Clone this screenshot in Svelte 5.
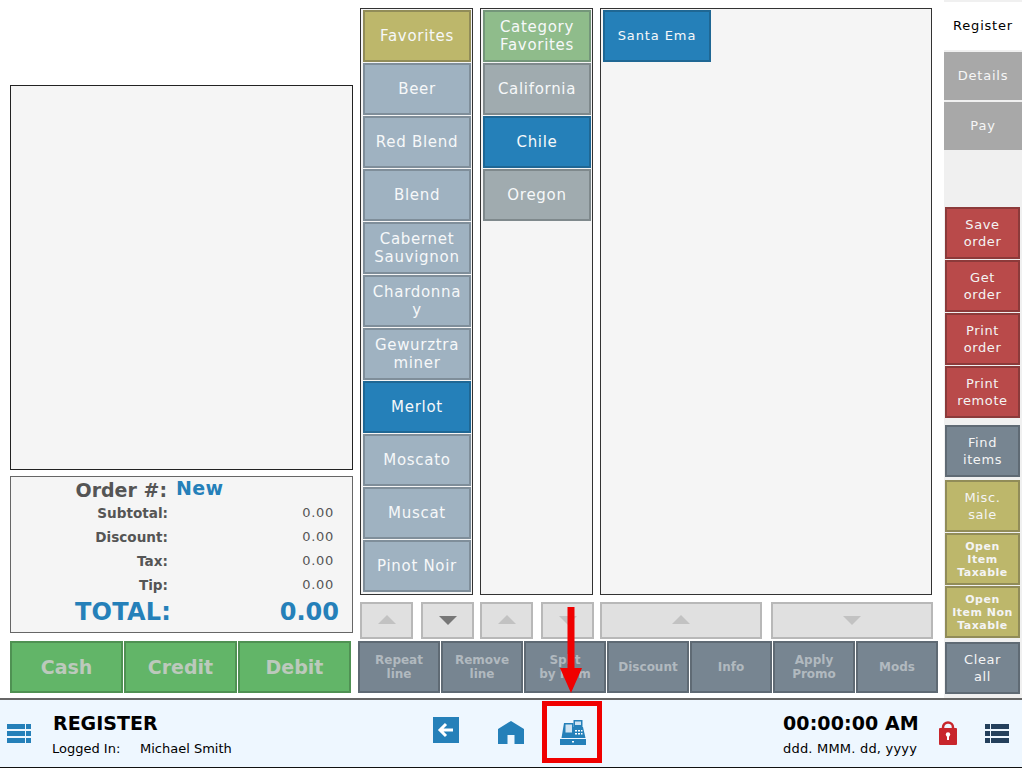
<script>
  const categories = [
    { label: 'Favorites', tone: 'olive' },
    { label: 'Beer' },
    { label: 'Red Blend' },
    { label: 'Blend' },
    { label: 'Cabernet\nSauvignon' },
    { label: 'Chardonna\ny' },
    { label: 'Gewurztra\nminer' },
    { label: 'Merlot', tone: 'blue' },
    { label: 'Moscato' },
    { label: 'Muscat' },
    { label: 'Pinot Noir' }
  ];
  const subcategories = [
    { label: 'Category\nFavorites', tone: 'green' },
    { label: 'California', tone: 'slate' },
    { label: 'Chile', tone: 'blue' },
    { label: 'Oregon', tone: 'slate' }
  ];
  const totals = ['Subtotal:', 'Discount:', 'Tax:', 'Tip:'];
  const actions = [
    'Repeat\nline', 'Remove\nline', 'Split\nby Item', 'Discount', 'Info', 'Apply\nPromo', 'Mods'
  ];
  const orderButtons = ['Save\norder', 'Get\norder', 'Print\norder', 'Print\nremote'];
  const openItems = ['Open\nItem\nTaxable', 'Open\nItem Non\nTaxable'];
</script>

<div class="page">
  <div class="main">
    <section class="left">
      <div class="receipt"></div>
      <div class="summary">
        <div class="order-line">
          <span class="order-label">Order #:</span>
          <span class="order-value">New</span>
        </div>
        {#each totals as label}
          <div class="total-line">
            <span class="total-label">{label}</span>
            <span class="total-value">0.00</span>
          </div>
        {/each}
        <div class="grand-line">
          <span class="grand-label">TOTAL:</span>
          <span class="grand-value">0.00</span>
        </div>
      </div>
      <div class="pay-row">
        <button class="pay" type="button">Cash</button>
        <button class="pay" type="button">Credit</button>
        <button class="pay" type="button">Debit</button>
      </div>
    </section>

    <section class="center">
      <div class="lists">
        <div class="list narrow">
          {#each categories as item}
            <button class="tile {item.tone ?? 'steel'}" type="button">{item.label}</button>
          {/each}
        </div>
        <div class="list narrow">
          {#each subcategories as item}
            <button class="tile {item.tone}" type="button">{item.label}</button>
          {/each}
        </div>
        <div class="list wide">
          <button class="tile blue small" type="button">Santa Ema</button>
        </div>
      </div>

      <div class="scrolls">
        <button class="scroll s1" type="button"><span class="arrow up"></span></button>
        <button class="scroll s2" type="button"><span class="arrow down dark"></span></button>
        <button class="scroll s3" type="button"><span class="arrow up"></span></button>
        <button class="scroll s4" type="button"><span class="arrow down"></span></button>
        <button class="scroll s5" type="button"><span class="arrow up"></span></button>
        <button class="scroll s6" type="button"><span class="arrow down"></span></button>
      </div>

      <div class="actions">
        {#each actions as label}
          <button class="action" type="button">{label}</button>
        {/each}
      </div>
    </section>

    <aside class="side">
      <div class="tabs">
        <button class="tab active" type="button">Register</button>
        <button class="tab" type="button">Details</button>
        <button class="tab" type="button">Pay</button>
      </div>
      <div class="side-group red-group">
        {#each orderButtons as label}
          <button class="side-btn red" type="button">{label}</button>
        {/each}
      </div>
      <div class="side-group find-group">
        <button class="side-btn dim" type="button">{'Find\nitems'}</button>
        <button class="side-btn olive misc" type="button">{'Misc.\nsale'}</button>
        {#each openItems as label}
          <button class="side-btn olive tiny" type="button">{label}</button>
        {/each}
      </div>
      <button class="side-btn dim clear" type="button">{'Clear\nall'}</button>
    </aside>
  </div>

  <footer class="footer">
    <div class="foot-left">
      <svg class="menu-icon" width="24" height="19" viewBox="0 0 24 19" fill="#2580b9">
        <rect x="0" y="0" width="18" height="5" /><rect x="19" y="0" width="5" height="5" />
        <rect x="0" y="7" width="18" height="5" /><rect x="19" y="7" width="5" height="5" />
        <rect x="0" y="14" width="18" height="5" /><rect x="19" y="14" width="5" height="5" />
      </svg>
      <div class="title-block">
        <div class="title">REGISTER</div>
        <div class="logged"><span class="logged-label">Logged In:</span><span>Michael Smith</span></div>
      </div>
    </div>

    <div class="foot-nav">
      <svg class="back" width="26" height="26" viewBox="0 0 26 26">
        <rect width="26" height="26" fill="#2580b9" />
        <path d="M7 13h13M13 7l-6 6 6 6" fill="none" stroke="#fff" stroke-width="3" />
      </svg>
      <svg class="home" width="26" height="23" viewBox="0 0 26 23" fill="#2580b9">
        <path d="M13 0 26 8v15H16.500v-9h-7v9H0V8z" />
      </svg>
      <svg class="till" width="27" height="26" viewBox="0 0 27 26" fill="#2580b9">
        <rect x="13.500" y="0" width="9" height="7" />
        <rect x="15" y="1.500" width="6" height="3.500" fill="#cfe3f2" />
        <path d="M4 3h9.500v4H23l2.500 11H1.500z" />
        <rect x="5.500" y="4.500" width="6.500" height="8" fill="#cfe3f2" />
        <rect x="15" y="10" width="2" height="1.500" fill="#fff" /><rect x="18" y="10" width="2" height="1.500" fill="#fff" /><rect x="21" y="10" width="1.500" height="1.500" fill="#fff" />
        <rect x="15" y="13" width="2" height="1.500" fill="#fff" /><rect x="18" y="13" width="2" height="1.500" fill="#fff" /><rect x="21" y="13" width="1.500" height="1.500" fill="#fff" />
        <rect x="0" y="19" width="26" height="6" />
        <rect x="12" y="21" width="2" height="1.500" fill="#fff" />
      </svg>
    </div>

    <div class="foot-right">
      <div class="clock">
        <div class="time">00:00:00 AM</div>
        <div class="date">ddd. MMM. dd, yyyy</div>
      </div>
      <svg class="lock" width="18" height="24" viewBox="0 0 18 24">
        <path d="M4 9V6.500a5 5 0 0 1 10 0V9" fill="none" stroke="#c8262c" stroke-width="2.500" />
        <rect x="0" y="7" width="18" height="17" rx="1" fill="#c8262c" />
        <circle cx="9" cy="13.500" r="2.200" fill="#fff" />
        <rect x="8" y="14" width="2" height="5" fill="#fff" />
      </svg>
      <svg class="list-icon" width="24" height="19" viewBox="0 0 24 19" fill="#24405c">
        <rect x="0" y="0" width="5" height="5" /><rect x="6" y="0" width="18" height="5" />
        <rect x="0" y="7" width="5" height="5" /><rect x="6" y="7" width="18" height="5" />
        <rect x="0" y="14" width="5" height="5" /><rect x="6" y="14" width="18" height="5" />
      </svg>
    </div>
  </footer>

  <!-- callout drawn over the screenshot -->
  <svg class="callout-arrow" width="22" height="86" viewBox="0 0 22 86">
    <path d="M7.500 0h7v61H22L11 86 0 61h7.500z" fill="#f00000" />
  </svg>
  <div class="callout-box"></div>
</div>

<style>
  :global(body) {
    background: #fff;
  }

  .page {
    position: relative;
    width: 1022px;
    height: 768px;
    overflow: hidden;
    display: flex;
    flex-direction: column;
    font-family: "DejaVu Sans", Verdana, sans-serif;
  }

  button {
    font-family: inherit;
    padding: 0;
    margin: 0;
    box-sizing: border-box;
    cursor: pointer;
    line-height: 18px;
    white-space: pre-line;
  }

  .main {
    display: flex;
    height: 698px;
  }

  .left {
    box-sizing: border-box;
    width: 358px;
    padding: 85px 5px 0 10px;
  }

  .receipt {
    height: 385px;
    box-sizing: border-box;
    border: 1px solid #222;
    background: #f5f5f5;
  }

  .summary {
    box-sizing: border-box;
    height: 157px;
    margin-top: 6px;
    border: 1px solid #666;
    background: #f5f5f5;
    color: #555;
  }

  .order-line {
    display: flex;
    height: 24px;
  }

  .order-label {
    width: 156px;
    text-align: right;
    font-size: 19px;
    font-weight: 700;
    line-height: 26px;
  }

  .order-value {
    margin-left: 9px;
    font-size: 19px;
    font-weight: 700;
    color: #2580b9;
    line-height: 22px;
    letter-spacing: 0.3px;
  }

  .total-line {
    display: flex;
    justify-content: space-between;
    height: 24px;
    line-height: 24px;
    padding-right: 18px;
  }

  .total-label {
    width: 157px;
    text-align: right;
    font-size: 13.6px;
    font-weight: 700;
  }

  .total-value {
    font-size: 13px;
    letter-spacing: 0.7px;
  }

  .grand-line {
    display: flex;
    justify-content: space-between;
    padding-right: 13px;
    color: #2580b9;
    font-weight: 700;
    font-size: 24px;
    line-height: 28px;
    margin-top: 1px;
  }

  .grand-label {
    width: 160px;
    text-align: right;
    letter-spacing: 0.2px;
  }

  .pay-row {
    display: flex;
    gap: 1px;
    margin-top: 8px;
  }

  .pay {
    width: 113px;
    height: 52px;
    background: #62b568;
    border: 2px solid #4f9153;
    color: #bcc9bc;
    font-size: 19px;
    font-weight: 700;
  }

  .center {
    width: 586px;
    display: flex;
    flex-direction: column;
  }

  .lists {
    display: flex;
    gap: 7px;
    margin-left: 2px;
    padding-top: 8px;
    height: 587px;
  }

  .list {
    box-sizing: border-box;
    height: 587px;
    border: 1px solid #333;
    background: #f5f5f5;
    padding: 1px 1px 0 2px;
    display: flex;
    flex-direction: column;
    align-items: flex-start;
    gap: 1px;
    overflow: hidden;
  }

  .narrow {
    width: 113px;
  }

  .wide {
    width: 332px;
  }

  .tile {
    width: 108px;
    height: 52px;
    flex: none;
    border: 2px solid;
    color: #f6f8f9;
    font-size: 15px;
    letter-spacing: 0.7px;
  }

  .tile.small {
    font-size: 13px;
    letter-spacing: 0.9px;
  }

  .steel {
    background: #9fb2c1;
    border-color: #7f8e9a;
  }

  .green {
    background: #8fbc8b;
    border-color: #74967a;
  }

  .slate {
    background: #a0abaf;
    border-color: #7f898c;
  }

  .blue {
    background: #2580b9;
    border-color: #1f6794;
  }

  .scrolls {
    display: flex;
    margin: 7px 0 0 2px;
  }

  .scroll {
    height: 37px;
    background: #e0e0e0;
    border: 2px solid #b8b8b8;
    display: flex;
    align-items: center;
    justify-content: center;
  }

  .s1 { width: 53px; }
  .s2 { width: 53px; margin-left: 8px; }
  .s3 { width: 53px; margin-left: 6px; }
  .s4 { width: 53px; margin-left: 8px; }
  .s5 { width: 162px; margin-left: 6px; }
  .s6 { width: 162px; margin-left: 9px; }

  .arrow {
    width: 0;
    height: 0;
    border-left: 9px solid transparent;
    border-right: 9px solid transparent;
  }

  .arrow.up {
    border-bottom: 9px solid #c2c2c2;
    margin-bottom: 3px;
  }

  .arrow.down {
    border-top: 9px solid #c2c2c2;
  }

  .arrow.down.dark {
    border-top-color: #777;
  }

  .actions {
    display: flex;
    gap: 1px;
    margin-top: 2px;
  }

  .action {
    width: 82px;
    height: 52px;
    background: #778591;
    border: 2px solid #5f6a74;
    color: #b1b9bf;
    font-size: 12px;
    line-height: 14px;
    font-weight: 700;
  }

  .side {
    box-sizing: border-box;
    width: 78px;
    height: 698px;
    background: #f0f0f0;
    display: flex;
    flex-direction: column;
    align-items: flex-start;
  }

  .tabs {
    display: flex;
    flex-direction: column;
    gap: 2px;
    padding-top: 2px;
  }

  .tab {
    width: 78px;
    height: 48px;
    background: #a8a8a8;
    border: none;
    color: #f6f6f6;
    font-size: 13px;
    letter-spacing: 0.8px;
  }

  .tab.active {
    background: #fff;
    color: #000;
  }

  .side-group {
    display: flex;
    flex-direction: column;
    gap: 1px;
    margin-left: 1px;
  }

  .red-group {
    margin-top: 57px;
  }

  .find-group {
    margin-top: 7px;
  }

  .side-btn {
    width: 75px;
    height: 52px;
    border-width: 2px;
    border-style: solid;
    color: #f4f4f4;
    font-size: 13px;
    line-height: 17px;
    letter-spacing: 0.6px;
  }

  .side-btn.misc {
    margin-top: 2px;
  }

  .side-btn.tiny {
    font-size: 11px;
    line-height: 13px;
    font-weight: 700;
    letter-spacing: 0.5px;
  }

  .red {
    background: #b94a4a;
    border-color: #8c3a3a;
  }

  .dim {
    background: #778591;
    border-color: #5f6a74;
  }

  .olive {
    background: #bdb76b;
    border-color: #918c58;
  }

  .clear {
    margin: 4px 0 0 1px;
    flex: none;
  }

  .footer {
    box-sizing: border-box;
    height: 70px;
    border-top: 2px solid #666;
    border-bottom: 1px solid #111;
    background: #eef7ff;
    display: flex;
    justify-content: space-between;
    position: relative;
  }

  .foot-left {
    display: flex;
    align-items: flex-start;
    padding-left: 7px;
  }

  .menu-icon {
    margin-top: 24px;
  }

  .title-block {
    margin-left: 22px;
    color: #000;
  }

  .title {
    font-size: 19px;
    font-weight: 700;
    line-height: 24px;
    margin-top: 11px;
  }

  .logged {
    font-size: 13px;
    line-height: 16px;
    margin-top: 6px;
    margin-left: -1px;
    display: flex;
  }

  .logged-label {
    width: 88px;
  }

  .foot-nav {
    position: absolute;
    left: 433px;
    top: 0;
    display: flex;
    align-items: flex-start;
  }

  .back {
    margin-top: 17px;
  }

  .home {
    margin: 21px 0 0 39px;
  }

  .till {
    margin: 20px 0 0 36px;
  }

  .foot-right {
    display: flex;
    align-items: flex-start;
    padding-right: 13px;
  }

  .clock {
    color: #000;
    width: 137px;
    white-space: nowrap;
  }

  .time {
    font-size: 19px;
    font-weight: 700;
    line-height: 24px;
    margin-top: 11px;
    letter-spacing: 0.1px;
  }

  .date {
    font-size: 13px;
    line-height: 16px;
    margin-top: 6px;
    letter-spacing: 0.2px;
  }

  .lock {
    margin: 21px 0 0 19px;
  }

  .list-icon {
    margin: 24px 0 0 28px;
  }

  .callout-arrow {
    position: absolute;
    left: 560px;
    top: 607px;
  }

  .callout-box {
    position: absolute;
    left: 542px;
    top: 701px;
    box-sizing: border-box;
    width: 60px;
    height: 62px;
    border: 5px solid #f00000;
  }
</style>
